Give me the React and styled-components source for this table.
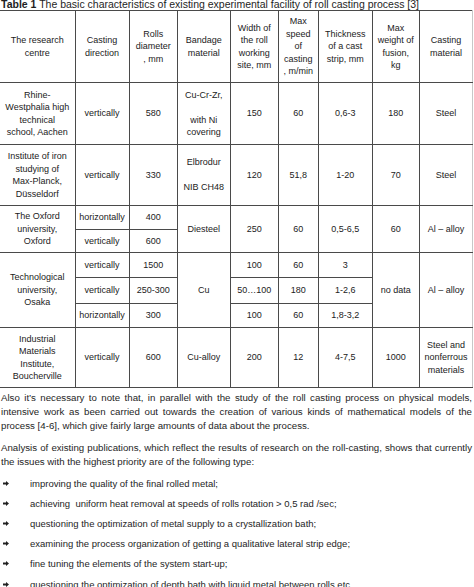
import styled, { createGlobalStyle } from "styled-components";

const GlobalStyle = createGlobalStyle`
  html, body {
    margin: 0;
    padding: 0;
    background: #ffffff;
    overflow: hidden;
  }
  body {
    font-family: "Liberation Sans", Arial, sans-serif;
    color: #1e1e1e;
  }
`;

const Page = styled.div`
  width: 474px;
  height: 587px;
  overflow: hidden;
`;

const Caption = styled.div`
  margin-top: -2px;
  height: 12px;
  line-height: 12px;
  font-size: 10.5px;
  padding-left: 1px;
  white-space: nowrap;

  b {
    font-weight: bold;
  }
`;

const Table = styled.table`
  border-collapse: collapse;
  table-layout: fixed;
  width: 473px;
  font-size: 9px;
  line-height: 12.5px;
  text-align: center;
  color: #222;
`;

const Row = styled.tr`
  height: ${(p) => p.$h}px;
`;

const Cell = styled.td`
  border: 1px solid #4a4a4a;
  padding: 0 2px;
  vertical-align: middle;
  overflow: hidden;

  &:first-child {
    border-left: none;
  }
  &:last-child {
    border-right-color: #c8c8c8;
  }
`;

const Head = styled(Cell).attrs({ as: "th" })`
  font-weight: normal;
`;

const Text = styled.p`
  margin: ${(p) => p.$top}px 0 0;
  padding: 0 2px 0 1px;
  font-size: 9.7px;
  line-height: 14px;
  text-align: justify;
`;

const List = styled.ul`
  list-style: none;
  margin: 4px 0 0;
  padding: 0;
`;

const Item = styled.li`
  display: flex;
  align-items: center;
  height: 20.2px;
  font-size: 9.5px;
  white-space: pre;
`;

const Bullet = styled.span`
  width: 30px;
  flex: none;
  display: flex;
  align-items: center;
  padding-left: 3px;
  box-sizing: border-box;
`;

const widths = [75, 54, 48, 53, 48, 40, 54, 47, 53];

const bullets = [
  "improving the quality of the final rolled metal;",
  "achieving  uniform heat removal at speeds of rolls rotation > 0,5 rad /sec;",
  "questioning the optimization of metal supply to a crystallization bath;",
  "examining the process organization of getting a qualitative lateral strip edge;",
  "fine tuning the elements of the system start-up;",
  "questioning the optimization of depth bath with liquid metal between rolls etc.",
];

function Arrow() {
  return (
    <svg width="6" height="5" viewBox="0 0 6 5">
      <path d="M0 1.6h3V0l3 2.5-3 2.5V3.4H0z" fill="#222" />
    </svg>
  );
}

export default function App() {
  return (
    <Page>
      <GlobalStyle />
      <Caption>
        <b>Table 1</b> The basic characteristics of existing experimental facility of roll casting process [3]
      </Caption>
      <Table>
        <colgroup>
          {widths.map((w, i) => (
            <col key={i} style={{ width: w }} />
          ))}
        </colgroup>
        <thead>
          <Row $h={72}>
            <Head>The research<br />centre</Head>
            <Head>Casting<br />direction</Head>
            <Head>Rolls<br />diameter<br />, mm</Head>
            <Head>Bandage<br />material</Head>
            <Head>Width of<br />the roll<br />working<br />site, mm</Head>
            <Head>Max<br />speed<br />of<br />casting<br />, m/min</Head>
            <Head>Thickness<br />of a cast<br />strip, mm</Head>
            <Head>Max<br />weight of<br />fusion,<br />kg</Head>
            <Head>Casting<br />material</Head>
          </Row>
        </thead>
        <tbody>
          <Row $h={62}>
            <Cell>Rhine-<br />Westphalia high<br />technical<br />school, Aachen</Cell>
            <Cell>vertically</Cell>
            <Cell>580</Cell>
            <Cell>Cu-Cr-Zr,<br /><br />with Ni<br />covering</Cell>
            <Cell>150</Cell>
            <Cell>60</Cell>
            <Cell>0,6-3</Cell>
            <Cell>180</Cell>
            <Cell>Steel</Cell>
          </Row>
          <Row $h={61}>
            <Cell>Institute of iron<br />studying of<br />Max-Planck,<br />Düsseldorf</Cell>
            <Cell>vertically</Cell>
            <Cell>330</Cell>
            <Cell>Elbrodur<br /><br />NIB CH48</Cell>
            <Cell>120</Cell>
            <Cell>51,8</Cell>
            <Cell>1-20</Cell>
            <Cell>70</Cell>
            <Cell>Steel</Cell>
          </Row>
          <Row $h={24}>
            <Cell rowSpan={2}>The Oxford<br />university,<br />Oxford</Cell>
            <Cell>horizontally</Cell>
            <Cell>400</Cell>
            <Cell rowSpan={2}>Diesteel</Cell>
            <Cell rowSpan={2}>250</Cell>
            <Cell rowSpan={2}>60</Cell>
            <Cell rowSpan={2}>0,5-6,5</Cell>
            <Cell rowSpan={2}>60</Cell>
            <Cell rowSpan={2}>Al – alloy</Cell>
          </Row>
          <Row $h={23}>
            <Cell>vertically</Cell>
            <Cell>600</Cell>
          </Row>
          <Row $h={25}>
            <Cell rowSpan={3}>Technological<br />university,<br />Osaka</Cell>
            <Cell>vertically</Cell>
            <Cell>1500</Cell>
            <Cell rowSpan={3}>Cu</Cell>
            <Cell>100</Cell>
            <Cell>60</Cell>
            <Cell>3</Cell>
            <Cell rowSpan={3}>no data</Cell>
            <Cell rowSpan={3}>Al – alloy</Cell>
          </Row>
          <Row $h={26}>
            <Cell>vertically</Cell>
            <Cell>250-300</Cell>
            <Cell>50…100</Cell>
            <Cell>180</Cell>
            <Cell>1-2,6</Cell>
          </Row>
          <Row $h={24}>
            <Cell>horizontally</Cell>
            <Cell>300</Cell>
            <Cell>100</Cell>
            <Cell>60</Cell>
            <Cell>1,8-3,2</Cell>
          </Row>
          <Row $h={60}>
            <Cell>Industrial<br />Materials<br />Institute,<br />Boucherville</Cell>
            <Cell>vertically</Cell>
            <Cell>600</Cell>
            <Cell>Cu-alloy</Cell>
            <Cell>200</Cell>
            <Cell>12</Cell>
            <Cell>4-7,5</Cell>
            <Cell>1000</Cell>
            <Cell>Steel and<br />nonferrous<br />materials</Cell>
          </Row>
        </tbody>
      </Table>
      <Text $top={3}>
        Also it’s necessary to note that, in parallel with the study of the roll casting process on physical models,
        intensive work as been carried out towards the creation of various kinds of mathematical models of the
        process [4-6], which give fairly large amounts of data about the process.
      </Text>
      <Text $top={8}>
        Analysis of existing publications, which reflect the results of research on the roll-casting, shows that currently
        the issues with the highest priority are of the following type:
      </Text>
      <List>
        {bullets.map((b) => (
          <Item key={b}>
            <Bullet>
              <Arrow />
            </Bullet>
            {b}
          </Item>
        ))}
      </List>
    </Page>
  );
}
